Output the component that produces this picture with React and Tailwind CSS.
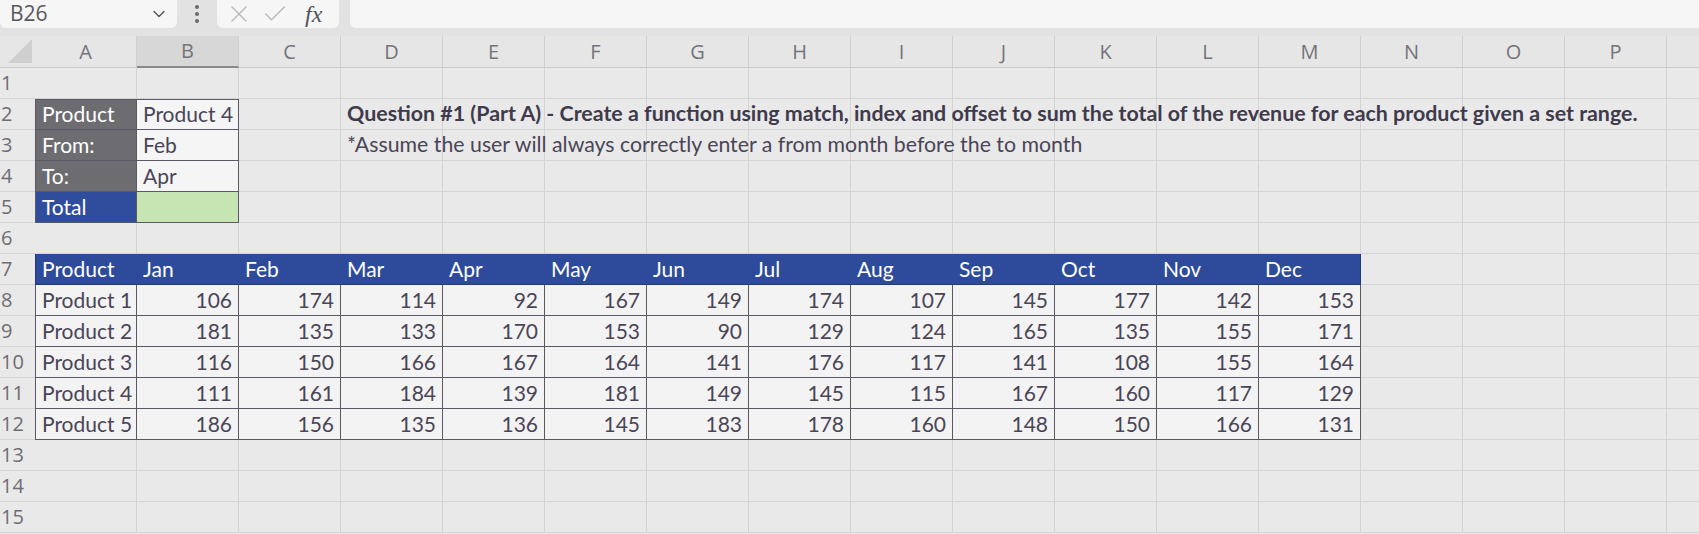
import { ChevronDown, X, Check } from "lucide-react";

const cols = ["A", "B", "C", "D", "E", "F", "G", "H", "I", "J", "K", "L", "M", "N", "O", "P", "Q"];
const months = ["Jan", "Feb", "Mar", "Apr", "May", "Jun", "Jul", "Aug", "Sep", "Oct", "Nov", "Dec"];
const data = [
  [106, 174, 114, 92, 167, 149, 174, 107, 145, 177, 142, 153],
  [181, 135, 133, 170, 153, 90, 129, 124, 165, 135, 155, 171],
  [116, 150, 166, 167, 164, 141, 176, 117, 141, 108, 155, 164],
  [111, 161, 184, 139, 181, 149, 145, 115, 167, 160, 117, 129],
  [186, 156, 135, 136, 145, 183, 178, 160, 148, 150, 166, 131],
];

const grid = "border-r border-b border-[#d3d3d3]";
const dark = "border-r border-b border-[#5c5866]";

// what sits in a given cell (row is 1-based, c is 0-based column index)
const cellFor = (row, c) => {
  if (row >= 2 && row <= 5 && c === 0) {
    const labels = ["Product", "From:", "To:", "Total"];
    const bg = row === 5 ? "bg-[#2f4d9c]" : "bg-[#6d6c70]";
    return { text: labels[row - 2], cls: `${bg} text-white ${dark} border-l border-l-[#5c5866] ${row === 2 ? "border-t border-t-[#5c5866]" : ""}` };
  }
  if (row >= 2 && row <= 5 && c === 1) {
    const vals = ["Product 4", "Feb", "Apr", ""];
    const bg = row === 5 ? "bg-[#c6e5b3]" : "bg-[#f5f5f5]";
    return { text: vals[row - 2], cls: `${bg} ${dark} ${row === 2 ? "border-t border-t-[#5c5866]" : ""}` };
  }
  if (row === 2 && c === 3) {
    return {
      text: "Question #1 (Part A) - Create a function using match, index and offset to sum the total of the revenue for each product given a set range.",
      cls: `${grid} font-bold text-[#3f3a4c] text-[21.4px]`,
      spill: true,
    };
  }
  if (row === 3 && c === 3) {
    return {
      text: "*Assume the user will always correctly enter a from month before the to month",
      cls: `${grid} text-[21.3px]`,
      spill: true,
    };
  }
  if (row === 7 && c <= 12) {
    return {
      text: c === 0 ? "Product" : months[c - 1],
      cls: `bg-[#2d4b9a] text-white border-b border-[#1f3a80] ${c === 0 ? "border-l border-l-[#1f3a80]" : ""} ${c === 12 ? "border-r border-r-[#1f3a80]" : ""}`,
    };
  }
  if (row >= 8 && row <= 12 && c <= 12) {
    const r = row - 8;
    if (c === 0) return { text: `Product ${r + 1}`, cls: `bg-[#f3f3f3] ${dark} border-l border-l-[#5c5866]` };
    return { text: String(data[r][c - 1]), cls: `bg-[#f3f3f3] ${dark}`, right: true };
  }
  return { text: "", cls: grid };
};

const Cell = ({ spec }) => (
  <div
    className={`w-[102px] h-full shrink-0 flex items-end px-[6px] ${spec.right ? "justify-end" : ""} ${spec.cls}`}
  >
    {spec.text && (
      <span className={`whitespace-nowrap leading-none pb-[5px] ${spec.spill ? "relative z-10" : ""}`}>{spec.text}</span>
    )}
  </div>
);

const Row = ({ n }) => (
  <div className="flex h-[31px]">
    <div className="w-[35px] shrink-0 h-full flex items-end pb-[5px] pl-[1px] text-[20px] leading-none text-[#6f6d74] border-b border-[#d3d3d3] font-['Open_Sans',sans-serif]">
      {n}
    </div>
    {cols.map((_, c) => (
      <Cell key={c} spec={cellFor(n, c)} />
    ))}
  </div>
);

export default function App() {
  const rows = Array.from({ length: 15 }, (_, i) => i + 1);
  return (
    <div className="w-[1699px] h-[534px] overflow-hidden bg-[#e9e9e9] font-['Lato','Liberation_Sans',sans-serif] text-[#4a4556] text-[21px]">
      {/* formula bar */}
      <div className="flex h-[36px] bg-[#e2e2e2] items-start gap-[11px]">
        <div className="w-[177px] h-[28px] bg-[#f6f6f6] rounded-b-[6px] flex items-center justify-between pl-[10px] pr-[8px]">
          <span className="text-[21px] text-[#5a5860] font-['Open_Sans',sans-serif]">B26</span>
          <ChevronDown className="w-[20px] h-[20px] text-[#5a5860]" strokeWidth={1.8} />
        </div>
        <div className="w-[18px] h-[28px] flex flex-col items-center justify-center gap-[3px]">
          <span className="w-[4px] h-[4px] rounded-full bg-[#6b6a70]" />
          <span className="w-[4px] h-[4px] rounded-full bg-[#6b6a70]" />
          <span className="w-[4px] h-[4px] rounded-full bg-[#6b6a70]" />
        </div>
        <div className="w-[122px] h-[28px] bg-[#f6f6f6] rounded-b-[6px] flex items-center pl-[8px] gap-[8px]">
          <X className="w-[28px] h-[28px] text-[#b9b8bd]" strokeWidth={1.2} />
          <Check className="w-[28px] h-[28px] text-[#b9b8bd]" strokeWidth={1.2} />
          <span className="ml-[8px] text-[24px] italic text-[#55535c] font-['Liberation_Serif',serif] leading-none">fx</span>
        </div>
        <div className="flex-1 h-[28px] bg-[#f6f6f6] rounded-bl-[6px]" />
      </div>

      {/* column headers */}
      <div className="flex h-[32px] bg-[#e6e6e6] text-[20px] text-[#75737a] font-['Open_Sans',sans-serif]">
        <div className="w-[35px] shrink-0 h-full relative border-b border-[#c9c9c9]">
          <div className="absolute right-[3px] bottom-[4px] w-0 h-0 border-l-[24px] border-l-transparent border-b-[24px] border-b-[#cfcfcf]" />
        </div>
        {cols.map((c) => (
          <div
            key={c}
            className={`w-[102px] shrink-0 h-full flex items-center justify-center border-r border-[#d0d0d0] ${
              c === "B" ? "bg-[#d7d7d7] border-b-2 border-b-[#8a8a8a]" : "border-b border-b-[#c9c9c9]"
            }`}
          >
            {c === "Q" ? "" : c}
          </div>
        ))}
      </div>

      {rows.map((n) => (
        <Row key={n} n={n} />
      ))}
    </div>
  );
}
